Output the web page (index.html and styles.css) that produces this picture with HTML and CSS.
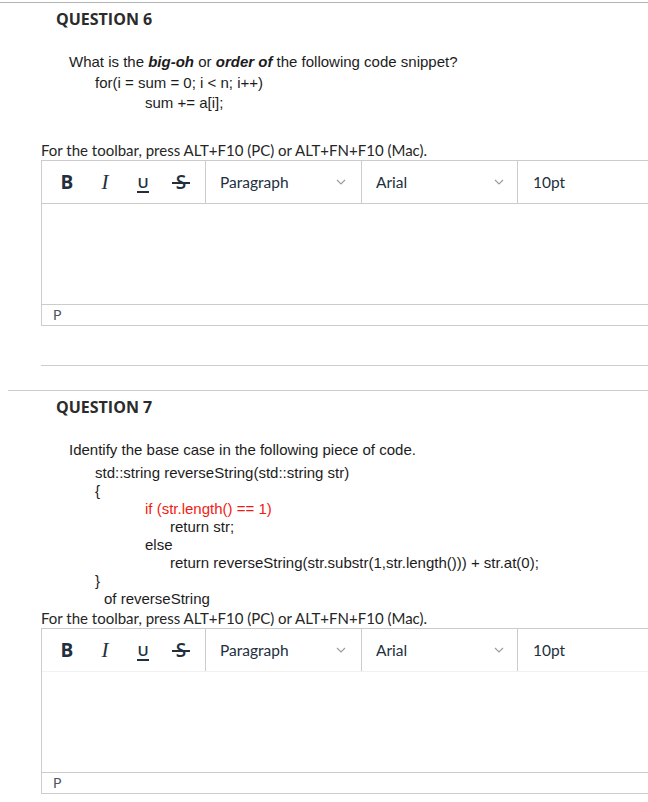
FILE: index.html
```html
<!DOCTYPE html>
<html lang="en">
<head>
<meta charset="utf-8">
<title>Questions</title>
<link rel="stylesheet" href="styles.css">
</head>
<body>
<div class="page">
  <div class="q-rule"></div>
  <section class="question">
    <h2 class="q-title">QUESTION 6</h2>
    <p class="prompt">What is the <b><i>big-oh</i></b> or <b><i>order of</i></b> the following code snippet?</p>
    <div class="code loose">
      <div class="ln">for(i = sum = 0; i &lt; n; i++)</div>
      <div class="ln i1">sum += a[i];</div>
    </div>
    <div class="answer spaced">
      <div class="hint">For the toolbar, press ALT+F10 (PC) or ALT+FN+F10 (Mac).</div>
      <div class="editor">
        <div class="toolbar">
          <div class="tb-group tb-format">
            <span class="tbtn"><span class="ic ic-b">B</span></span>
            <span class="tbtn"><span class="ic ic-i">I</span></span>
            <span class="tbtn"><span class="ic ic-u">U</span></span>
            <span class="tbtn"><span class="ic ic-s">S</span></span>
          </div>
          <div class="tb-group tb-select sel-block">
            <span class="sel-label">Paragraph</span>
            <svg class="chev" width="10" height="6" viewBox="0 0 10 6"><path d="M1 1l4 4 4-4" fill="none" stroke="currentColor" stroke-width="1.1"/></svg>
          </div>
          <div class="tb-group tb-select sel-font">
            <span class="sel-label">Arial</span>
            <svg class="chev" width="10" height="6" viewBox="0 0 10 6"><path d="M1 1l4 4 4-4" fill="none" stroke="currentColor" stroke-width="1.1"/></svg>
          </div>
          <div class="tb-group tb-select sel-size">
            <span class="sel-label">10pt</span>
          </div>
        </div>
        <div class="content"></div>
        <div class="status"><span>P</span></div>
      </div>
      <div class="answer-rule"></div>
    </div>
  </section>

  <div class="q-rule inset"></div>
  <section class="question">
    <h2 class="q-title">QUESTION 7</h2>
    <p class="prompt">Identify the base case in the following piece of code.</p>
    <div class="code">
      <div class="ln">std::string reverseString(std::string str)</div>
      <div class="ln">{</div>
      <div class="ln i1 red">if (str.length() == 1)</div>
      <div class="ln i2">return str;</div>
      <div class="ln i1">else</div>
      <div class="ln i2">return reverseString(str.substr(1,str.length())) + str.at(0);</div>
      <div class="ln">}</div>
      <div class="ln i-end">of reverseString</div>
    </div>
    <div class="answer">
      <div class="hint">For the toolbar, press ALT+F10 (PC) or ALT+FN+F10 (Mac).</div>
      <div class="editor idle">
        <div class="toolbar">
          <div class="tb-group tb-format">
            <span class="tbtn"><span class="ic ic-b">B</span></span>
            <span class="tbtn"><span class="ic ic-i">I</span></span>
            <span class="tbtn"><span class="ic ic-u">U</span></span>
            <span class="tbtn"><span class="ic ic-s">S</span></span>
          </div>
          <div class="tb-group tb-select sel-block">
            <span class="sel-label">Paragraph</span>
            <svg class="chev" width="10" height="6" viewBox="0 0 10 6"><path d="M1 1l4 4 4-4" fill="none" stroke="currentColor" stroke-width="1.1"/></svg>
          </div>
          <div class="tb-group tb-select sel-font">
            <span class="sel-label">Arial</span>
            <svg class="chev" width="10" height="6" viewBox="0 0 10 6"><path d="M1 1l4 4 4-4" fill="none" stroke="currentColor" stroke-width="1.1"/></svg>
          </div>
          <div class="tb-group tb-select sel-size">
            <span class="sel-label">10pt</span>
          </div>
        </div>
        <div class="content"></div>
        <div class="status"><span>P</span></div>
      </div>
    </div>
  </section>
</div>
</body>
</html>
```

FILE: styles.css
```css
* { box-sizing: border-box; }

html, body {
  margin: 0;
  padding: 0;
}

body {
  background: #ffffff;
  overflow: hidden;
  font-family: "Liberation Sans", Arial, sans-serif;
  color: #1c1c1c;
}

.page {
  width: 720px;
  padding-top: 2px;
}

.q-rule {
  border-top: 1px solid #b4b4b4;
}

.q-rule.inset {
  margin: 24px 0 0 8px;
  border-top-color: #cdcdcd;
}

.question {
  padding-left: 41px;
}

.q-title {
  margin: 5px 0 0 15px;
  font: 700 16px/22px "Open Sans", sans-serif;
  color: #2b2b2b;
}

.prompt {
  margin: 23px 0 0 28px;
  font-size: 15px;
  line-height: 18px;
}

.code {
  margin: 5px 0 0 54px;
  font-size: 15px;
  line-height: 18px;
}

.ln {
  white-space: pre;
}

.code.loose {
  margin-top: 2px;
  line-height: 19.5px;
}

.ln.i1 { padding-left: 50px; }
.ln.i2 { padding-left: 75px; }
.ln.i-end { padding-left: 9px; }
.ln.red { color: #f21b14; }

.answer.spaced { margin-top: 28px; }

.hint {
  font: 15px/20px "Lato", sans-serif;
  color: #262626;
}

.editor {
  width: 680px;
  border: 1px solid #cccccc;
}

.toolbar {
  display: flex;
  height: 43px;
  border-bottom: 1px solid #cccccc;
}

.editor.idle .toolbar {
  border-bottom-color: #f1f1f1;
}

.tb-group {
  display: flex;
  align-items: center;
  border-right: 1px solid #cccccc;
}

.tb-format {
  padding: 0 5px 0 6px;
}

.tbtn {
  width: 38px;
  height: 34px;
  display: flex;
  align-items: center;
  justify-content: center;
  color: #222f3e;
}

.ic {
  display: inline-block;
  line-height: 1;
}

.ic-b {
  font: 700 19px/1 "Open Sans", sans-serif;
}

.ic-i {
  font: italic 400 21px/1 "Liberation Serif", serif;
}

.ic-u {
  font: 600 15px/1 "Open Sans", sans-serif;
  padding-bottom: 1px;
  border-bottom: 2px solid #222f3e;
  margin-top: 3px;
}

.ic-s {
  position: relative;
  font: 600 19px/1 "Open Sans", sans-serif;
}

.ic-s::after {
  content: "";
  position: absolute;
  left: -4px;
  right: -4px;
  top: 52%;
  height: 2px;
  background: #222f3e;
}

.tb-select {
  width: 156px;
  justify-content: space-between;
  font: 15.5px/20px "Lato", sans-serif;
  color: #222f3e;
}

.sel-block { padding: 0 15px 0 14px; }
.sel-font { padding: 0 13px 0 14px; }
.sel-size {
  width: 160px;
  padding: 0 0 0 15px;
  border-right: none;
}

.chev {
  color: #9a9a9a;
  display: block;
}

.content {
  height: 100px;
}

.status {
  height: 21px;
  border-top: 1px solid #cccccc;
  padding-left: 11px;
  font: 14px/20px "Lato", sans-serif;
  color: #4b5460;
}

.answer-rule {
  margin-top: 39px;
  border-top: 1px solid #cdcdcd;
}
```
